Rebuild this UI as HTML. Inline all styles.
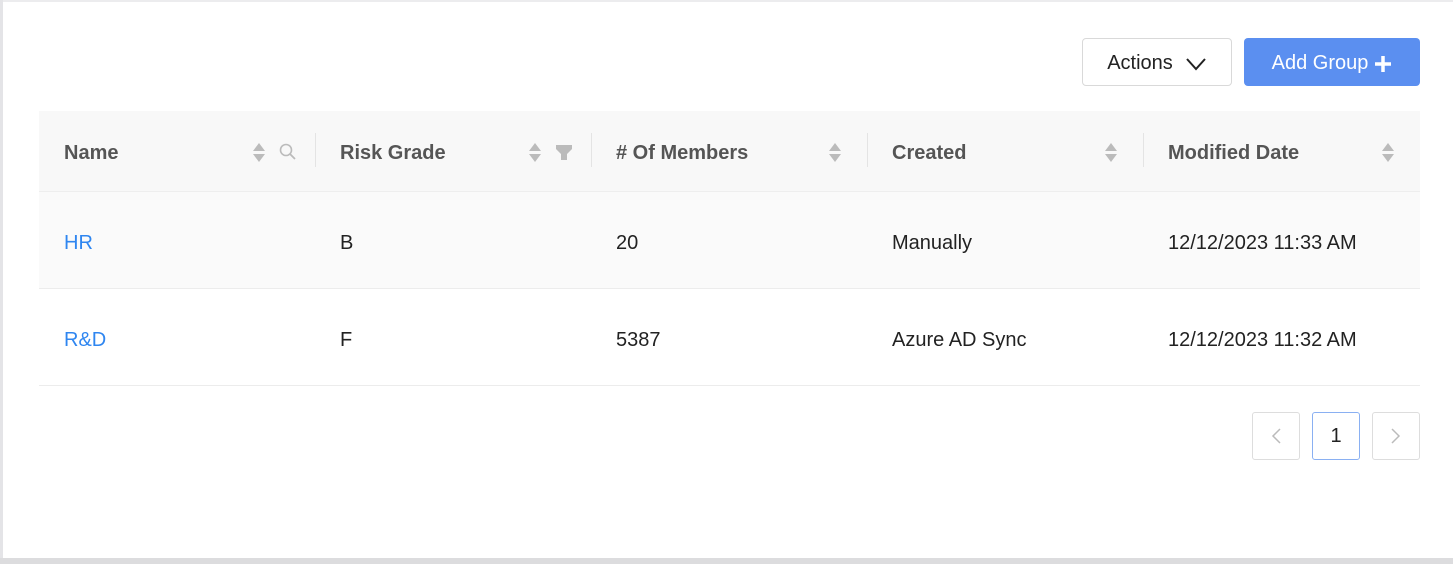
<!DOCTYPE html>
<html><head><meta charset="utf-8">
<style>
*{box-sizing:border-box;margin:0;padding:0}
html,body{width:1453px;height:564px;overflow:hidden;background:#fff;font-family:"Liberation Sans",sans-serif}
.frame-top{position:absolute;left:0;top:0;width:1453px;height:2px;background:#ececee}
.frame-left{position:absolute;left:0;top:0;width:3px;height:564px;background:#e4e4e7}
.frame-bot{position:absolute;left:0;top:558px;width:1453px;height:6px;background:#dcdcde}
.btn{position:absolute;top:38px;height:48px;border-radius:4px;font-size:20px;display:flex;align-items:center;justify-content:center;padding-top:3px}
.act{left:1082px;width:150px;border:1px solid #d9d9d9;color:#222;background:#fff}
.add{left:1244px;width:176px;background:#5b8ff0;color:#fff}
.hdr{position:absolute;left:39px;top:111px;width:1381px;height:81px;background:#f8f8f8;border-bottom:1px solid #eee}
.row{position:absolute;left:39px;width:1381px;height:97px;border-bottom:1px solid #ececec}
.cell{position:absolute;font-size:20px;color:#222;line-height:24px}
.h{font-weight:bold;color:#555;top:30px}
.sep{position:absolute;top:22px;width:1px;height:34px;background:#e4e4e4}
.sort{position:absolute;top:31px}
.pg{position:absolute;top:412px;width:48px;height:48px;border:1px solid #ddd;border-radius:3px;display:flex;align-items:center;justify-content:center;font-size:20px;color:#222}
</style></head><body>
<div class="frame-top"></div><div class="frame-left"></div><div class="frame-bot"></div>
<div class="btn act">Actions<svg width="22" height="14" style="margin-left:12px" viewBox="0 0 22 14"><path d="M2 2 L11 12 L20 2" fill="none" stroke="#222" stroke-width="2"/></svg></div>
<div class="btn add">Add Group<svg width="18" height="18" style="margin-left:6px" viewBox="0 0 18 18"><path d="M9 1V17M1 9H17" stroke="#fff" stroke-width="3.5"/></svg></div>

<div class="hdr">
 <div class="cell h" style="left:25px">Name</div>
 <svg class="sort" style="left:213px" width="14" height="22" viewBox="0 0 14 22"><path d="M7 1L13 9H1Z M1 12H13L7 20Z" fill="#bbb"/></svg>
 <svg class="sort" style="left:240px;top:32px" width="18" height="18" viewBox="0 0 18 18"><circle cx="7" cy="7" r="5.5" fill="none" stroke="#bbb" stroke-width="1.6"/><path d="M11 11L16 16" stroke="#bbb" stroke-width="1.8"/></svg>
 <div class="sep" style="left:276px"></div>
 <div class="cell h" style="left:301px">Risk Grade</div>
 <svg class="sort" style="left:489px" width="14" height="22" viewBox="0 0 14 22"><path d="M7 1L13 9H1Z M1 12H13L7 20Z" fill="#bbb"/></svg>
 <svg class="sort" style="left:516px;top:33px" width="18" height="18" viewBox="0 0 18 18"><path d="M1 1H17V5L12 10V16H6V10L1 5Z" fill="#bbb"/></svg>
 <div class="sep" style="left:552px"></div>
 <div class="cell h" style="left:577px"># Of Members</div>
 <svg class="sort" style="left:789px" width="14" height="22" viewBox="0 0 14 22"><path d="M7 1L13 9H1Z M1 12H13L7 20Z" fill="#bbb"/></svg>
 <div class="sep" style="left:828px"></div>
 <div class="cell h" style="left:853px">Created</div>
 <svg class="sort" style="left:1065px" width="14" height="22" viewBox="0 0 14 22"><path d="M7 1L13 9H1Z M1 12H13L7 20Z" fill="#bbb"/></svg>
 <div class="sep" style="left:1104px"></div>
 <div class="cell h" style="left:1129px">Modified Date</div>
 <svg class="sort" style="left:1342px" width="14" height="22" viewBox="0 0 14 22"><path d="M7 1L13 9H1Z M1 12H13L7 20Z" fill="#bbb"/></svg>
</div>

<div class="row" style="top:192px;background:#fafafa">
 <div class="cell" style="left:25px;top:39px;color:#2f86f0">HR</div>
 <div class="cell" style="left:301px;top:39px">B</div>
 <div class="cell" style="left:577px;top:39px">20</div>
 <div class="cell" style="left:853px;top:39px">Manually</div>
 <div class="cell" style="left:1129px;top:39px">12/12/2023 11:33 AM</div>
</div>
<div class="row" style="top:289px">
 <div class="cell" style="left:25px;top:39px;color:#2f86f0">R&amp;D</div>
 <div class="cell" style="left:301px;top:39px">F</div>
 <div class="cell" style="left:577px;top:39px">5387</div>
 <div class="cell" style="left:853px;top:39px">Azure AD Sync</div>
 <div class="cell" style="left:1129px;top:39px">12/12/2023 11:32 AM</div>
</div>

<div class="pg" style="left:1252px"><svg width="12" height="18" viewBox="0 0 12 18"><path d="M10 2L3 9L10 16" fill="none" stroke="#bbb" stroke-width="1.5"/></svg></div>
<div class="pg" style="left:1312px;border-color:#8ab0f2">1</div>
<div class="pg" style="left:1372px"><svg width="12" height="18" viewBox="0 0 12 18"><path d="M2 2L9 9L2 16" fill="none" stroke="#bbb" stroke-width="1.5"/></svg></div>
</body></html>
